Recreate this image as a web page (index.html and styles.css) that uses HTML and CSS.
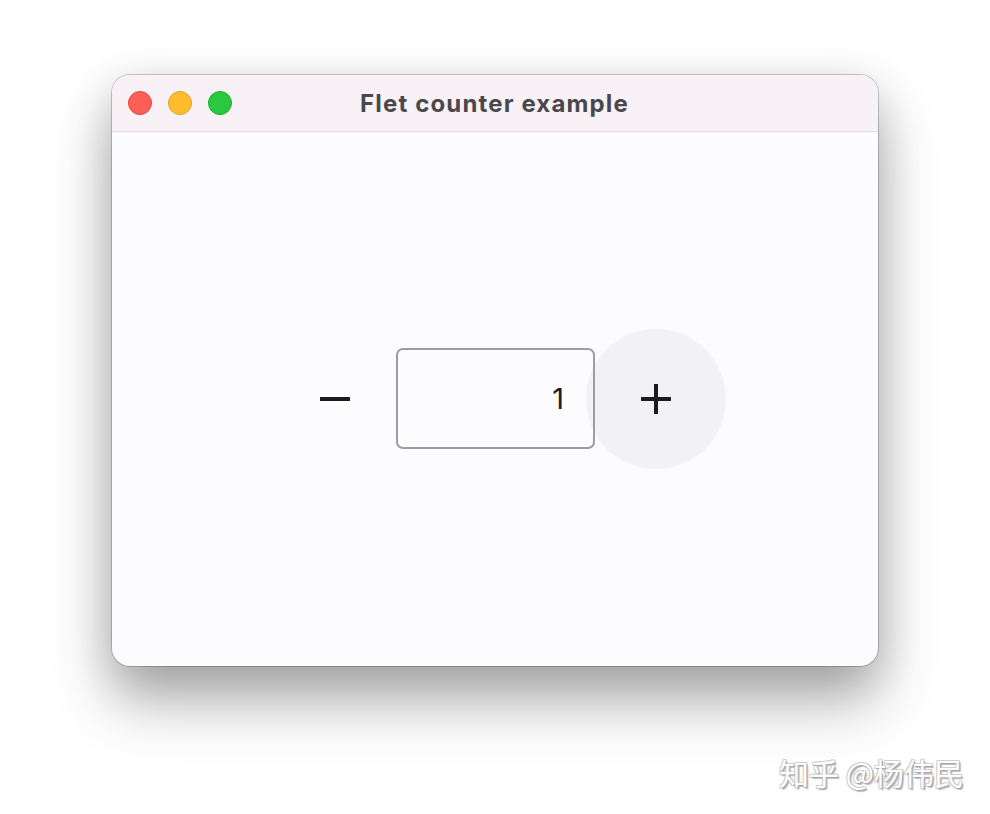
FILE: index.html
```html
<!DOCTYPE html>
<html>
<head>
<meta charset="utf-8">
<link rel="stylesheet" href="styles.css">
</head>
<body>
<div class="window">
  <div class="titlebar">
    <div class="lights">
      <span class="light red"></span>
      <span class="light yellow"></span>
      <span class="light green"></span>
    </div>
    <div class="title">Flet counter example</div>
  </div>
  <div class="content">
    <div class="row">
      <button class="icon-btn" aria-label="minus">
        <svg width="32" height="32" viewBox="0 0 32 32"><rect x="1" y="14" width="30" height="4" fill="#1c1b1f"/></svg>
      </button>
      <div class="field"><span class="value">1</span></div>
      <button class="icon-btn hover" aria-label="plus">
        <svg width="32" height="32" viewBox="0 0 32 32"><rect x="1" y="14" width="30" height="4" fill="#1c1b1f"/><rect x="14" y="1" width="4" height="30" fill="#1c1b1f"/></svg>
      </button>
    </div>
  </div>
</div>
<div class="watermark">知乎 @杨伟民</div>
</body>
</html>
```
FILE: styles.css
```css
html, body {
  margin: 0;
  padding: 0;
  background: #ffffff;
}
body {
  width: 990px;
  height: 814px;
  position: relative;
  overflow: hidden;
  padding-top: 75px;
  padding-left: 112px;
  box-sizing: border-box;
  font-family: Inter, "Liberation Sans", sans-serif;
}
.window {
  width: 766px;
  height: 591px;
  border-radius: 18px;
  background: #fcfcfe;
  box-shadow: 0 0 0 1px rgba(0,0,0,0.2), 0 36px 60px rgba(0,0,0,0.3), 0 10px 45px rgba(0,0,0,0.14);
  display: flex;
  flex-direction: column;
  overflow: hidden;
}
.titlebar {
  height: 56px;
  flex: none;
  background: #f8f2f6;
  border-bottom: 1px solid #e2dde1;
  display: flex;
  align-items: center;
  position: relative;
}
.lights {
  display: flex;
  gap: 16px;
  padding-left: 16px;
}
.light {
  width: 24px;
  height: 24px;
  border-radius: 50%;
  box-sizing: border-box;
}
.red { background: #ff5f57; border: 1px solid #e0443e; }
.yellow { background: #febc2e; border: 1px solid #dea123; }
.green { background: #28c840; border: 1px solid #1aab29; }
.title {
  position: absolute;
  left: 0;
  right: 0;
  text-align: center;
  font-size: 24px;
  font-weight: 700;
  color: #4b474d;
  letter-spacing: 1.15px;
  padding-right: 1px;
}
.content {
  flex: 1;
  display: flex;
  align-items: center;
  justify-content: center;
}
.row {
  display: flex;
  align-items: center;
  gap: 37px;
  margin-left: 1px;
  margin-top: -1px;
}
.icon-btn {
  width: 48px;
  height: 48px;
  border: none;
  background: transparent;
  padding: 0;
  display: flex;
  align-items: center;
  justify-content: center;
  position: relative;
}
.icon-btn svg { position: relative; z-index: 1; }
.icon-btn.hover::before {
  content: "";
  position: absolute;
  width: 140px;
  height: 140px;
  left: -46px;
  top: -46px;
  border-radius: 50%;
  background: #f2f2f4;
}
.field {
  width: 199px;
  height: 101px;
  box-sizing: border-box;
  border: 2px solid #9e9ca0;
  border-radius: 7px;
  display: flex;
  align-items: center;
  justify-content: flex-end;
  padding-right: 29px;
  position: relative;
  z-index: 2;
}
.value {
  font-size: 29px;
  color: #1c1b1f;
  font-family: Inter, "Liberation Sans", sans-serif;
}
.watermark {
  position: absolute;
  left: 779px;
  top: 750px;
  font-family: "Noto Sans CJK SC", sans-serif;
  font-size: 30px;
  color: #ffffff;
  letter-spacing: 0px;
  text-shadow: 1px 1px 0 #a8a8a8, -1px -1px 0 #d0d0d0, 1px -1px 0 #d0d0d0, -1px 1px 0 #d0d0d0, 2px 2px 1px #bdbdbd;
}
```
